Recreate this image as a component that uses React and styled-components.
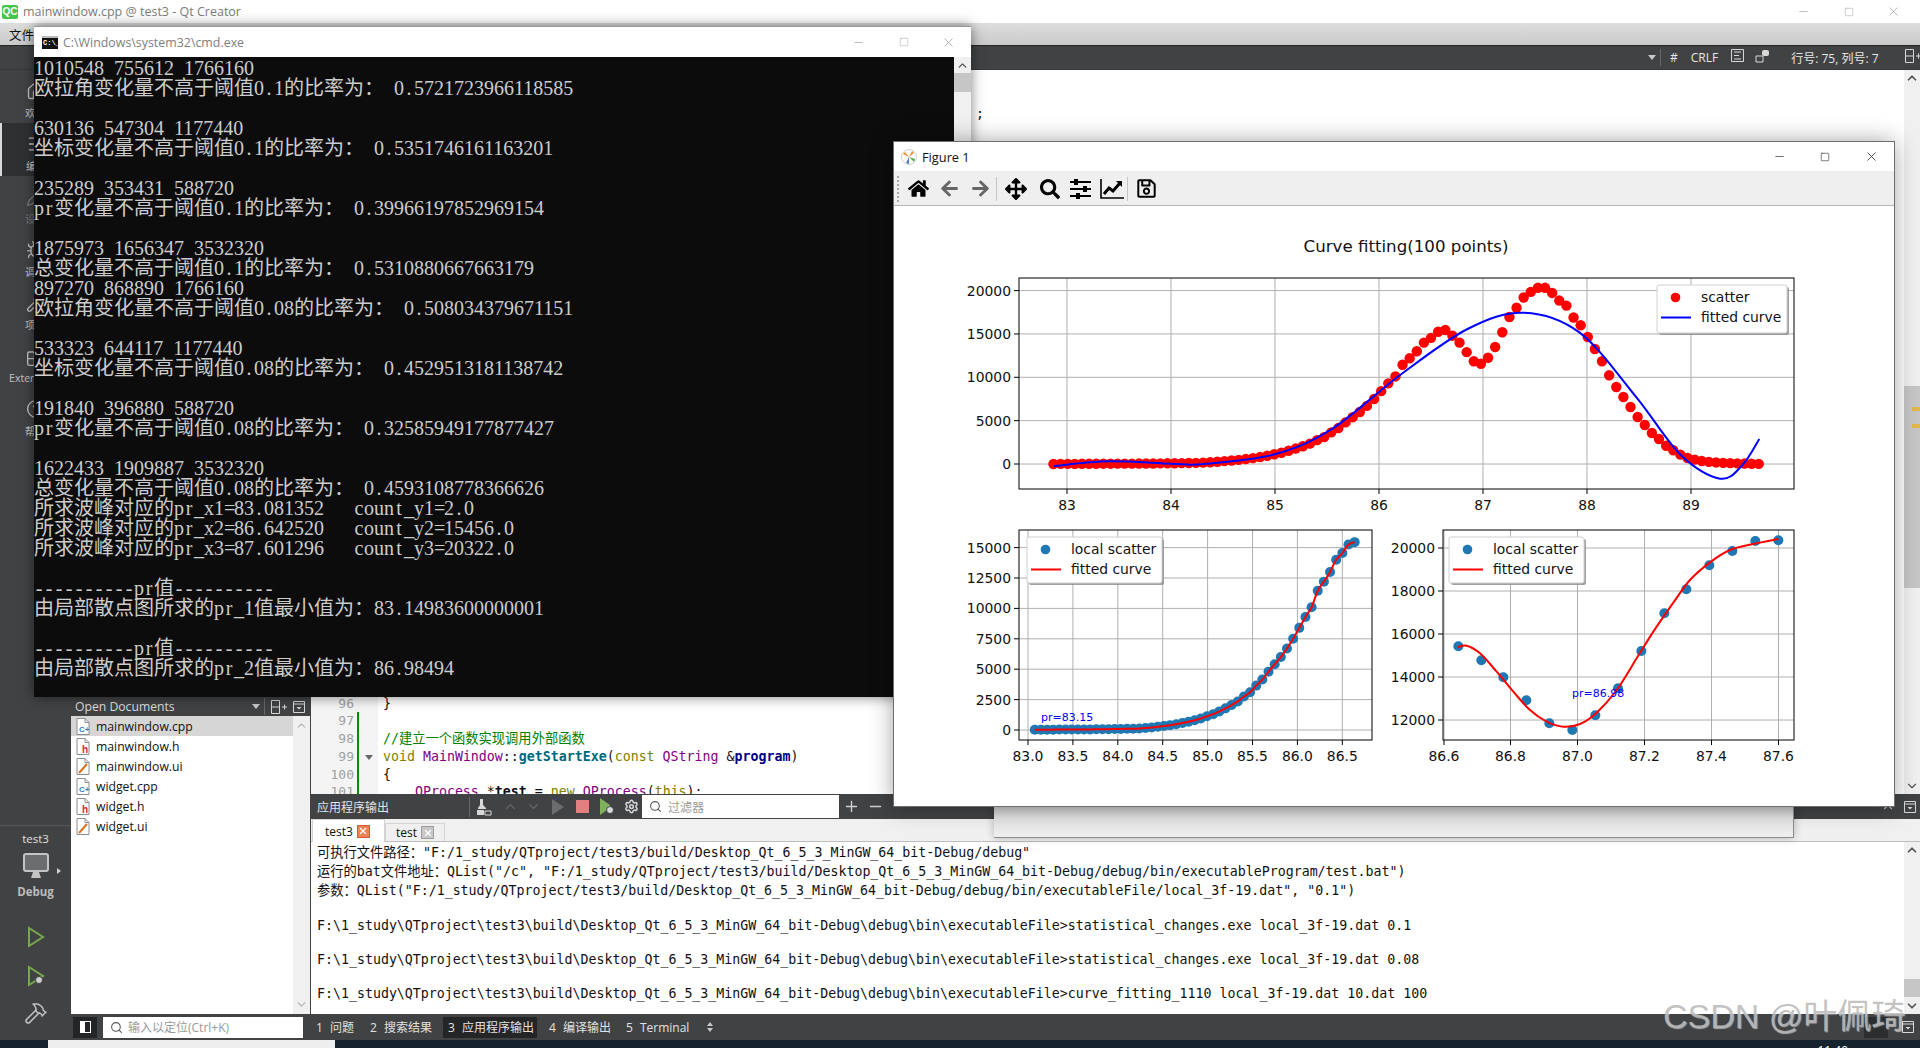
import React from 'react'
import styled, { createGlobalStyle } from 'styled-components'
import {
  FaHome, FaArrowLeft, FaArrowRight, FaArrowsAlt, FaSearch, FaRegSave,
} from 'react-icons/fa'
import {
  Home, AlignJustify, PenLine, Bug, Wrench, Blocks, HelpCircle, Hammer,
  ChevronUp, ChevronDown, Settings, Search, Plus, Minus, Square, X,
} from 'lucide-react'

const GlobalStyle = createGlobalStyle`
  html, body { margin: 0; padding: 0; background: #14232e; overflow: hidden; }
  * { box-sizing: border-box; }
`

const UI_FONT = `"Open Sans", "Noto Sans CJK SC", sans-serif`
const MONO_FONT = `"DejaVu Sans Mono", "Noto Sans CJK SC", monospace`

const Desktop = styled.div`
  position: relative;
  width: 1920px;
  height: 1048px;
  overflow: hidden;
  display: flex;
  flex-direction: column;
  background: #14232e;
  font-family: ${UI_FONT};
`
const QtWindow = styled.div`
  height: 1040px;
  display: flex;
  flex-direction: column;
`
const TitleBar = styled.div`
  height: 23px;
  flex: none;
  background: #fff;
  display: flex;
  align-items: center;
  padding: 0 4px 0 2px;
  font-size: 12.5px;
  color: #7c7c7c;
`
const QtLogo = styled.span`
  width: 16px;
  height: 14px;
  margin-right: 5px;
  border-radius: 2px;
  background: #45c64a;
  color: #fff;
  font: bold 10px "Liberation Sans", sans-serif;
  display: flex;
  align-items: center;
  justify-content: center;
`
const WinControls = styled.div`
  margin-left: auto;
  display: flex;
  align-items: center;
  color: ${p => p.$color || '#8a8a8a'};
`
const WinSlot = styled.span`
  width: ${p => p.$w || 45}px;
  display: flex;
  justify-content: center;
  align-items: center;
`
const MenuBar = styled.div`
  height: 22px;
  flex: none;
  background: linear-gradient(#dedede, #c9c9c9);
  display: flex;
  align-items: center;
  padding-left: 9px;
  font-size: 12.5px;
  color: #111;
`
const DarkToolbar = styled.div`
  height: 25px;
  flex: none;
  background: #404244;
  border-top: 1px solid #242526;
  border-bottom: 1px solid #37383a;
  display: flex;
  align-items: center;
  color: #e6e6e6;
  font-size: 12px;
`
const Caret = styled.span`
  width: 0;
  height: 0;
  border-left: 4px solid transparent;
  border-right: 4px solid transparent;
  border-top: 5px solid #c8c8c8;
`
const VSep = styled.span`
  width: 1px;
  height: ${p => p.$h || 17}px;
  background: #66686a;
  flex: none;
  margin: ${p => p.$m || '0'};
`
const BarText = styled.span`
  margin-left: ${p => p.$ml || 0}px;
  white-space: pre;
`
const Workspace = styled.div`
  flex: 1;
  min-height: 0;
  display: flex;
`
const Sidebar = styled.nav`
  width: 71px;
  flex: none;
  background: #404244;
  display: flex;
  flex-direction: column;
  color: #bdbdbd;
`
const Mode = styled.div`
  height: 53px;
  position: relative;
  padding-top: 8px;
  display: flex;
  flex-direction: column;
  align-items: center;
  justify-content: center;
  gap: 4px;
  font-size: 10.5px;
  white-space: nowrap;
  color: ${p => (p.$dim ? '#77797b' : '#c4c4c4')};
  background: ${p => (p.$active ? '#2f3031' : 'transparent')};
  border-left: ${p => (p.$active ? '2px solid #d9d9d9' : 'none')};
`
const KitGroup = styled.div`
  margin-top: auto;
  height: 215px;
  border-top: 1px solid #58595b;
  display: flex;
  flex-direction: column;
  align-items: center;
  padding-top: 5px;
`
const KitName = styled.div`
  font-size: 11.5px;
  line-height: 16px;
  color: #e0e0e0;
`
const KitDevice = styled.div`
  position: relative;
  margin-top: 6px;
  height: 26px;
`
const KitArrow = styled.span`
  position: absolute;
  left: 34px;
  top: 15px;
  width: 0;
  height: 0;
  border-top: 3px solid transparent;
  border-bottom: 3px solid transparent;
  border-left: 4px solid #cfcfcf;
`
const KitLabel = styled.div`
  margin-top: 5px;
  font-size: 11.5px;
  font-weight: 700;
  color: #bcbcbc;
`
const KitAction = styled.div`
  margin-top: ${p => p.$mt}px;
  height: 22px;
  display: flex;
  align-items: center;
`
const Center = styled.div`
  flex: 1;
  min-width: 0;
  display: flex;
  flex-direction: column;
`
const CenterTop = styled.div`
  flex: 1;
  min-height: 0;
  display: flex;
`
const DocsColumn = styled.aside`
  width: 240px;
  flex: none;
  display: flex;
  flex-direction: column;
  background: #fff;
`
const DocsSpacer = styled.div`
  height: 627px;
  flex: none;
`
const DocsHeader = styled.div`
  height: 19px;
  flex: none;
  background: #404244;
  color: #dedede;
  font-size: 12.2px;
  display: flex;
  align-items: center;
  padding-left: 4px;
`
const DocsBody = styled.div`
  flex: 1;
  display: flex;
  border-right: 1px solid #404244;
`
const DocsList = styled.div`
  flex: 1;
`
const DocRow = styled.div`
  height: 20px;
  display: flex;
  align-items: center;
  padding-left: 5px;
  gap: 6px;
  font-size: 12.2px;
  color: #111;
  background: ${p => (p.$active ? '#d6d6d6' : 'transparent')};
`
const MiniScroll = styled.div`
  width: 17px;
  flex: none;
  background: #f0f0f0;
  display: flex;
  flex-direction: column;
  align-items: center;
  justify-content: space-between;
  padding: 3px 0;
  color: #b0b0b0;
`
const RightColumn = styled.div`
  flex: 1;
  min-width: 0;
  display: flex;
  flex-direction: column;
`
const EditorPane = styled.section`
  height: 724px;
  flex: none;
  display: flex;
  background: #fff;
`
const CodeArea = styled.div`
  flex: 1;
  min-width: 0;
  overflow: hidden;
  font-family: ${MONO_FONT};
  font-size: 13.28px;
  color: #111;
`
const StrayLine = styled.div`
  margin: 35px 0 573px 665px;
  height: 17px;
  line-height: 17px;
`
const CodeRow = styled.div`
  display: flex;
  height: ${p => p.$h || 17}px;
  line-height: ${p => p.$h || 17}px;
`
const CodeText = styled.span`
  white-space: pre;
`
const LineNo = styled.span`
  width: 46px;
  flex: none;
  background: #f4f4f4;
  padding-right: 3px;
  text-align: right;
  color: #a0a0a0;
  font-size: 13px;
`
const ChangeBar = styled.span`
  width: 2px;
  flex: none;
  background: ${p => (p.$on ? '#0a8a0a' : '#f4f4f4')};
`
const FoldCol = styled.span`
  width: 19px;
  flex: none;
  margin-right: 5px;
  background: #f4f4f4;
  display: flex;
  align-items: center;
  justify-content: center;
`
const FoldMark = styled.span`
  width: 0;
  height: 0;
  border-left: 4px solid transparent;
  border-right: 4px solid transparent;
  border-top: 5px solid #666;
`
const Tok = styled.span`
  color: ${p => p.$c || '#111'};
  font-weight: ${p => (p.$b ? 700 : 400)};
`
const ScrollTrack = styled.div`
  position: relative;
  width: 16px;
  flex: none;
  background: #f0f0f0;
  display: flex;
  flex-direction: column;
  align-items: center;
  justify-content: space-between;
  color: #555;
  padding: 1px 0;
`
const ScrollThumb = styled.div`
  position: absolute;
  left: 0;
  right: 0;
  top: ${p => p.$top}px;
  height: ${p => p.$h}px;
  background: #c6c6c6;
`
const ScrollMark = styled.div`
  position: absolute;
  left: 8px;
  right: 0;
  top: ${p => p.$top}px;
  height: 4px;
  background: #e2b84c;
`
const OutputPane = styled.section`
  flex: 1;
  min-height: 0;
  display: flex;
  flex-direction: column;
`
const OutputHeader = styled.div`
  height: 25px;
  flex: none;
  background: #404244;
  display: flex;
  align-items: center;
  color: #e4e4e4;
  font-size: 12px;
  padding-left: 6px;
`
const Slot = styled.span`
  width: ${p => p.$w}px;
  flex: none;
  display: flex;
  justify-content: center;
  align-items: center;
  color: ${p => p.$c || '#d8d8d8'};
`
const HeaderTitle = styled.span`
  width: 152px;
  flex: none;
`
const FilterBox = styled.div`
  width: 197px;
  height: 23px;
  flex: none;
  background: #fff;
  display: flex;
  align-items: center;
  padding-left: 7px;
  gap: 6px;
  font-size: 12px;
  color: #9a9a9a;
`
const HeaderRight = styled.div`
  margin-left: auto;
  display: flex;
  align-items: center;
  gap: 9px;
  padding-right: 4px;
  color: #bdbdbd;
`
const TabBar = styled.div`
  height: 23px;
  flex: none;
  background: #f0f0f0;
  border-bottom: 1px solid #bdbdbd;
  display: flex;
  align-items: flex-end;
  padding-left: 1px;
`
const Tab = styled.div`
  height: ${p => (p.$active ? 23 : 18)}px;
  width: ${p => (p.$active ? 73 : 60)}px;
  margin-bottom: ${p => (p.$active ? -1 : 0)}px;
  padding-left: ${p => (p.$active ? 12 : 10)}px;
  background: ${p => (p.$active ? '#fff' : '#f0f0f0')};
  border: 1px solid #d4d4d4;
  border-bottom: none;
  display: flex;
  align-items: center;
  gap: 4px;
  font-size: 12px;
  color: #111;
`
const TabClose = styled.span`
  width: 13px;
  height: 13px;
  flex: none;
  display: flex;
  align-items: center;
  justify-content: center;
  color: #fff;
  background: ${p => (p.$active ? '#ee8255' : '#c8c8c8')};
  border: 1px solid ${p => (p.$active ? '#d8593a' : '#9d9d9d')};
`
const OutputBody = styled.div`
  flex: 1;
  min-height: 0;
  display: flex;
  background: #fff;
`
const OutputText = styled.div`
  flex: 1;
  min-width: 0;
  padding: 1px 0 0 6px;
  font-family: ${MONO_FONT};
  font-size: 13.28px;
  color: #111;
  white-space: pre;
  overflow: hidden;
`
const OutputLine = styled.div`
  height: ${p => p.$h || 17}px;
  line-height: ${p => p.$h || 17}px;
`
const StatusBar = styled.footer`
  height: 26px;
  flex: none;
  background: #404244;
  display: flex;
  align-items: center;
  color: #e2e2e2;
  font-size: 12px;
`
const SideToggle = styled.span`
  width: 24px;
  height: 21px;
  margin-left: 2px;
  background: #242526;
  display: flex;
  align-items: center;
  justify-content: center;
`
const ToggleGlyph = styled.span`
  width: 11px;
  height: 12px;
  border: 1px solid #fff;
  border-left-width: 5px;
`
const LocatorBox = styled.div`
  width: 200px;
  height: 21px;
  margin: 0 8px 0 6px;
  background: #fff;
  color: #9a9a9a;
  display: flex;
  align-items: center;
  padding-left: 7px;
  gap: 5px;
  font-size: 12px;
`
const PaneItem = styled.div`
  width: ${p => p.$w}px;
  height: 21px;
  margin-right: ${p => p.$mr || 0}px;
  flex: none;
  padding-left: 5px;
  display: flex;
  align-items: center;
  gap: 7px;
  white-space: nowrap;
  background: ${p => (p.$active ? '#242526' : 'transparent')};
`
const UpDown = styled.span`
  display: flex;
  flex-direction: column;
  gap: 2px;
  margin-left: 4px;
`
const UpArrow = styled.span`
  width: 0;
  height: 0;
  border-left: 3px solid transparent;
  border-right: 3px solid transparent;
  border-bottom: 4px solid #c8c8c8;
`
const DownArrow = styled(UpArrow)`
  border-bottom: none;
  border-top: 4px solid #c8c8c8;
`
const StatusRight = styled.div`
  margin-left: auto;
  display: flex;
  align-items: center;
  gap: 14px;
  padding-right: 6px;
`
const DarkButton = styled.span`
  width: 24px;
  height: 21px;
  background: #2c2d2e;
`
const Taskbar = styled.div`
  flex: 1;
  display: flex;
  overflow: hidden;
  background: #14232e;
`
const TaskThumb = styled.div`
  width: 287px;
  margin-left: 48px;
  background: #eeeeee;
`
const Clock = styled.div`
  margin-left: auto;
  margin-right: 72px;
  padding-top: 4px;
  font-size: 12px;
  line-height: 14px;
  color: #fff;
`
// windows floating over the IDE
const CmdWindow = styled.div`
  position: absolute;
  left: 34px;
  top: 26px;
  width: 937px;
  height: 671px;
  display: flex;
  flex-direction: column;
  box-shadow: 0 0 12px rgba(0, 0, 0, 0.5);
  border-top: 1px solid #999;
`
const CmdTitle = styled.div`
  height: 30px;
  flex: none;
  background: #fff;
  display: flex;
  align-items: center;
  padding-left: 8px;
  gap: 5px;
  font-size: 12.4px;
  color: #7e7e7e;
`
const CmdIcon = styled.span`
  width: 16px;
  height: 13px;
  background: #111;
  border-top: 2px solid #bbb;
  color: #fff;
  font: bold 7px "Liberation Mono", monospace;
  line-height: 10px;
  padding-left: 1px;
  overflow: hidden;
`
const CmdBody = styled.div`
  flex: 1;
  min-height: 0;
  display: flex;
  background: #0c0c0c;
`
const Console = styled.div`
  flex: 1;
  min-width: 0;
  padding-top: 1px;
  overflow: hidden;
  color: #cccccc;
  font-family: "Liberation Serif", "Noto Sans CJK SC", serif;
  font-size: 20px;
`
const ConsoleLine = styled.div`
  height: 20px;
  line-height: 20px;
  white-space: pre;
`
const Cell = styled.span`
  display: inline-block;
  width: 10px;
  text-align: center;
  white-space: pre;
`
const CmdScroll = styled.div`
  position: relative;
  width: 17px;
  flex: none;
  background: #f0f0f0;
  display: flex;
  justify-content: center;
  color: #555;
  padding-top: 2px;
`
const BackDialog = styled.div`
  position: absolute;
  left: 994px;
  top: 780px;
  width: 800px;
  height: 58px;
  background: linear-gradient(#c4c4c4 26px, #e2e2e2 38px, #efefef);
  border-right: 1px solid #8c8c8c;
  border-bottom: 1px solid #8c8c8c;
  box-shadow: 0 0 8px rgba(0, 0, 0, 0.25);
`
const FigureWindow = styled.div`
  position: absolute;
  left: 894px;
  top: 142px;
  width: 1000px;
  height: 664px;
  display: flex;
  flex-direction: column;
  background: #fff;
  box-shadow: 0 0 22px rgba(0, 0, 0, 0.38);
  outline: 1px solid #6e6e6e;
`
const FigureTitle = styled.div`
  height: 29px;
  flex: none;
  display: flex;
  align-items: center;
  padding-left: 7px;
  gap: 5px;
  font-size: 12.8px;
  color: #111;
`
const FigureToolbar = styled.div`
  height: 35px;
  flex: none;
  background: #efefef;
  border-bottom: 1px solid #b5b5b5;
  display: flex;
  align-items: center;
  padding: 1px 0 0 11px;
  color: #000;
`
const Grip = styled.span`
  width: 2px;
  height: 26px;
  margin-left: -8px;
  margin-right: 4px;
  border-left: 2px dotted #a8a8a8;
`
const ToolSlot = styled.span`
  width: ${p => p.$w || 31}px;
  flex: none;
  display: flex;
  justify-content: center;
  color: ${p => p.$c || '#000'};
`
const ToolSep = styled.span`
  width: 1px;
  height: 24px;
  flex: none;
  background: #c4c4c4;
`
const PlotSvg = styled.svg`
  display: block;
  font-family: "DejaVu Sans", sans-serif;
  font-size: 13.9px;
  fill: #111;
`
const Watermark = styled.div`
  position: absolute;
  left: 1663px;
  top: 994px;
  white-space: nowrap;
  font-family: "Liberation Sans", "Noto Sans CJK SC", sans-serif;
  font-size: 34px;
  line-height: 44px;
  color: rgba(185, 185, 185, 0.85);
  text-shadow: 1px 1px 1px rgba(255, 255, 255, 0.55);
`

const CONSOLE_LINES = [
  '1010548 755612 1766160',
  '欧拉角变化量不高于阈值0.1的比率为： 0.5721723966118585',
  '',
  '630136 547304 1177440',
  '坐标变化量不高于阈值0.1的比率为： 0.5351746161163201',
  '',
  '235289 353431 588720',
  'pr变化量不高于阈值0.1的比率为： 0.39966197852969154',
  '',
  '1875973 1656347 3532320',
  '总变化量不高于阈值0.1的比率为： 0.5310880667663179',
  '897270 868890 1766160',
  '欧拉角变化量不高于阈值0.08的比率为： 0.508034379671151',
  '',
  '533323 644117 1177440',
  '坐标变化量不高于阈值0.08的比率为： 0.4529513181138742',
  '',
  '191840 396880 588720',
  'pr变化量不高于阈值0.08的比率为： 0.32585949177877427',
  '',
  '1622433 1909887 3532320',
  '总变化量不高于阈值0.08的比率为： 0.4593108778366626',
  '所求波峰对应的pr_x1=83.081352   count_y1=2.0',
  '所求波峰对应的pr_x2=86.642520   count_y2=15456.0',
  '所求波峰对应的pr_x3=87.601296   count_y3=20322.0',
  '',
  '----------pr值----------',
  '由局部散点图所求的pr_1值最小值为：83.14983600000001',
  '',
  '----------pr值----------',
  '由局部散点图所求的pr_2值最小值为：86.98494',
]

const BUILD = 'F:/1_study/QTproject/test3/build/Desktop_Qt_6_5_3_MinGW_64_bit-Debug'
const WIN_BIN = 'F:\\1_study\\QTproject\\test3\\build\\Desktop_Qt_6_5_3_MinGW_64_bit-Debug\\debug\\bin\\executableFile>'
const OUTPUT_LINES = [
  { h: 19, t: `可执行文件路径："${BUILD}/debug"` },
  { h: 19, t: `运行的bat文件地址：QList("/c", "${BUILD}/debug/bin/executableProgram/test.bat")` },
  { h: 19, t: `参数：QList("${BUILD}/debug/bin/executableFile/local_3f-19.dat", "0.1")` },
  { t: '' },
  { t: `${WIN_BIN}statistical_changes.exe local_3f-19.dat 0.1` },
  { t: '' },
  { t: `${WIN_BIN}statistical_changes.exe local_3f-19.dat 0.08` },
  { t: '' },
  { t: `${WIN_BIN}curve_fitting_1110 local_3f-19.dat 10.dat 100` },
]

// digits and CJK already have the console's cell widths, the rest gets a cell
function ConsoleText({ text }) {
  const runs = text.match(/\d+|[\u4e00-\u9fff\uff1a]+|./g) || []
  return (
    <ConsoleLine>
      {runs.map((r, i) => (r.length === 1 && !/[\d\u4e00-\u9fff\uff1a]/.test(r)
        ? <Cell key={i}>{r}</Cell>
        : <React.Fragment key={i}>{r}</React.Fragment>))}
    </ConsoleLine>
  )
}

// scatter values of the 100 points, x = 82.87 + 0.0685 * i
const Y_VALUES = [
  2, 10, 15, 20, 25, 30, 30, 35, 35, 40, 40, 45, 50, 55, 60, 70, 80, 90, 100, 110,
  130, 160, 200, 260, 330, 400, 480, 570, 680, 800, 950, 1130, 1300, 1530, 1780, 2050, 2350, 2750, 3100, 3650,
  4150, 4800, 5400, 6000, 6700, 7500, 8400, 9300, 10100, 11450, 12200, 13000, 14000, 14550, 15250, 15450, 14800, 14000, 12900, 11850,
  11560, 12250, 13500, 15200, 16950, 18020, 19200, 19850, 20322, 20322, 19730, 18850, 18270, 16900, 16000, 14650, 13270, 11850, 10230, 8880,
  7730, 6580, 5420, 4500, 3580, 2880, 2100, 1580, 1080, 690, 500, 350, 250, 180, 130, 100, 70, 50, 30, 10,
]
const POINTS = Y_VALUES.map((y, i) => [82.87 + 0.0685 * i, y])

const smooth = pts => {
  let d = `M${pts[0][0]} ${pts[0][1]}`
  for (let i = 0; i < pts.length - 1; i++) {
    const p0 = pts[i - 1] || pts[i]
    const p1 = pts[i]
    const p2 = pts[i + 1]
    const p3 = pts[i + 2] || p2
    d += `C${p1[0] + (p2[0] - p0[0]) / 6} ${p1[1] + (p2[1] - p0[1]) / 6} ${p2[0] - (p3[0] - p1[0]) / 6} ${p2[1] - (p3[1] - p1[1]) / 6} ${p2[0]} ${p2[1]}`
  }
  return d
}

const MAIN_CURVE = [
  [203, 618], [300, 604], [412, 611], [470, 612], [598, 582], [700, 505], [820, 345], [940, 207], [1040, 158],
  [1140, 218], [1240, 410], [1320, 585], [1390, 656], [1430, 615], [1460, 537],
].map(([x, y]) => [940 + x / 1.782, 260 + y / 3])

const RIGHT_POINTS = [
  [115, 379], [184, 421], [250, 472], [319, 541], [388, 610], [457, 630], [526, 586], [594, 505],
  [664, 393], [733, 280], [799, 208], [868, 136], [937, 93], [1006, 63], [1075, 61],
].map(([x, y]) => [1420 + x / 3, 520 + y / 3])

const RIGHT_CURVE = [
  [113, 382], [140, 377], [180, 400], [230, 455], [280, 515], [330, 570], [380, 605], [430, 620], [480, 612], [530, 578],
  [590, 510], [650, 415], [700, 335], [760, 248], [810, 180], [870, 127], [930, 90], [1000, 72], [1075, 57],
].map(([x, y]) => [1420 + x / 3, 520 + y / 3])

const LEFT_FIT = POINTS.slice(3, 56).map(([x, y]) => [1028 + (x - 83) * 89.8, 730 - y * 0.01216])

function Axes({ box, xTicks, yTicks, children }) {
  const { l, t, r, b } = box
  return (
    <g>
      {xTicks.map(([, x]) => <line key={x} x1={x} x2={x} y1={t} y2={b} stroke="#b0b0b0" />)}
      {yTicks.map(([, y]) => <line key={y} x1={l} x2={r} y1={y} y2={y} stroke="#b0b0b0" />)}
      {children}
      <rect x={l} y={t} width={r - l} height={b - t} fill="none" stroke="#000" />
      {xTicks.map(([label, x]) => (
        <g key={label}>
          <line x1={x} x2={x} y1={b} y2={b + 5} stroke="#000" />
          <text x={x} y={b + 21} textAnchor="middle">{label}</text>
        </g>
      ))}
      {yTicks.map(([label, y]) => (
        <g key={label}>
          <line x1={l - 5} x2={l} y1={y} y2={y} stroke="#000" />
          <text x={l - 8} y={y + 5} textAnchor="end">{label}</text>
        </g>
      ))}
    </g>
  )
}

function Legend({ x, y, w, h, dotColor, lineColor, first, second }) {
  return (
    <g>
      <rect x={x + 2} y={y + 2} width={w} height={h} rx="2" fill="#8a8a8a" opacity="0.8" />
      <rect x={x} y={y} width={w} height={h} rx="2" fill="#fff" stroke="#d0d0d0" />
      <circle cx={x + 18.5} cy={y + 12.5} r="4.8" fill={dotColor} />
      <text x={x + 44} y={y + 17}>{first}</text>
      <line x1={x + 4} x2={x + 34} y1={y + 32.5} y2={y + 32.5} stroke={lineColor} strokeWidth="2" />
      <text x={x + 44} y={y + 37}>{second}</text>
    </g>
  )
}

function FigurePlots() {
  const mainX = p => 1067 + (p - 83) * 104
  const mainY = v => 464 - v * 0.00867
  const leftX = p => 1028 + (p - 83) * 89.8
  const leftY = v => 730 - v * 0.01216
  return (
    <PlotSvg width="1000" height="600" viewBox="894 206 1000 600">
      <text x="1406" y="252" textAnchor="middle" fontSize="16.67">Curve fitting(100 points)</text>

      <Axes
        box={{ l: 1019, t: 278, r: 1794, b: 489 }}
        xTicks={[83, 84, 85, 86, 87, 88, 89].map(v => [String(v), mainX(v)])}
        yTicks={[20000, 15000, 10000, 5000, 0].map(v => [String(v), mainY(v)])}
      >
        {POINTS.map(([x, y], i) => <circle key={i} cx={mainX(x)} cy={mainY(y)} r="5.2" fill="#ff0000" />)}
        <path d={smooth(MAIN_CURVE)} fill="none" stroke="#0000ff" strokeWidth="2" />
        <Legend x={1657} y={285} w={130} h={48} dotColor="#ff0000" lineColor="#0000ff" first="scatter" second="fitted curve" />
      </Axes>

      <Axes
        box={{ l: 1019, t: 530, r: 1372, b: 740 }}
        xTicks={['83.0', '83.5', '84.0', '84.5', '85.0', '85.5', '86.0', '86.5'].map(v => [v, leftX(Number(v))])}
        yTicks={[15000, 12500, 10000, 7500, 5000, 2500, 0].map(v => [String(v), leftY(v)])}
      >
        {POINTS.slice(3, 56).map(([x, y], i) => <circle key={i} cx={leftX(x)} cy={leftY(y)} r="5" fill="#1f77b4" />)}
        <path d={smooth(LEFT_FIT)} fill="none" stroke="#ff0000" strokeWidth="2" />
        <text x="1041" y="721" fontSize="11" fill="#0000ff">pr=83.15</text>
        <Legend x={1027} y={537} w={135} h={46} dotColor="#1f77b4" lineColor="#ff0000" first="local scatter" second="fitted curve" />
      </Axes>

      <Axes
        box={{ l: 1443, t: 530, r: 1794, b: 740 }}
        xTicks={[['86.6', 1444], ['86.8', 1510.5], ['87.0', 1577.5], ['87.2', 1644.5], ['87.4', 1711.5], ['87.6', 1778.5]]}
        yTicks={[['20000', 548], ['18000', 591], ['16000', 634], ['14000', 677], ['12000', 720]]}
      >
        {RIGHT_POINTS.map(([x, y], i) => <circle key={i} cx={x} cy={y} r="5" fill="#1f77b4" />)}
        <path d={smooth(RIGHT_CURVE)} fill="none" stroke="#ff0000" strokeWidth="2" />
        <text x="1572" y="697" fontSize="11" fill="#0000ff">pr=86.98</text>
        <Legend x={1449} y={537} w={135} h={46} dotColor="#1f77b4" lineColor="#ff0000" first="local scatter" second="fitted curve" />
      </Axes>
    </PlotSvg>
  )
}

const DocIcon = ({ kind }) => (
  <svg width="14" height="17" viewBox="0 0 14 17" style={{ flex: 'none' }}>
    <path d="M1 .5h8l4 4v12H1z" fill="#fff" stroke="#8c8c8c" />
    <path d="M9 .5v4h4" fill="none" stroke="#8c8c8c" />
    {kind === 'cpp' && <text x="3" y="14" fontSize="8" fontWeight="700" fill="#2f7fc1" fontFamily="Liberation Sans">C+</text>}
    {kind === 'h' && <text x="6" y="15" fontSize="10" fontWeight="700" fill="#d62b2b" fontFamily="Liberation Sans">h</text>}
    {kind === 'ui' && <path d="M3 15L11 6" stroke="#d9721c" strokeWidth="2" />}
  </svg>
)

const MonitorIcon = () => (
  <svg width="26" height="26" viewBox="0 0 26 26">
    <rect x="1" y="1" width="24" height="17" rx="2" fill="#6b6d6f" stroke="#c4c4c4" strokeWidth="2" />
    <path d="M10 19h6l2 6H8z" fill="#c4c4c4" />
  </svg>
)

const RunIcon = ({ debug }) => (
  <svg width="18" height="22" viewBox="0 0 18 22">
    <path d="M2 2l14 9-14 9z" fill="none" stroke="#78a84e" strokeWidth="2" />
    {debug && <circle cx="12" cy="15" r="3.5" fill="#cfcfcf" stroke="#404244" />}
  </svg>
)

const SlidersIcon = () => (
  <svg width="21" height="20" viewBox="0 0 21 20">
    <path d="M0 3h21M0 10h21M0 17h21" stroke="#000" strokeWidth="2" />
    <rect x="4" y="0" width="4" height="6" /><rect x="13" y="7" width="4" height="6" /><rect x="6" y="14" width="4" height="6" />
  </svg>
)

const ChartIcon = () => (
  <svg width="24" height="22" viewBox="0 0 24 22">
    <path d="M1 1v19h23" fill="none" stroke="#000" strokeWidth="1.6" />
    <path d="M4 16l5-6 4 3 7-8" fill="none" stroke="#000" strokeWidth="3" />
    <path d="M16 3h6v6z" />
  </svg>
)

const BrushIcon = () => (
  <svg width="16" height="18" viewBox="0 0 16 18">
    <path d="M4 1h3v6l3 3v1H2v-1l2-3z" fill="#d8d8d8" />
    <path d="M9 13h6v4H9z" fill="none" stroke="#d8d8d8" />
    <path d="M1 12h7v5H1z" fill="#d8d8d8" />
  </svg>
)

const SplitIcon = () => (
  <svg width="16" height="14" viewBox="0 0 16 14">
    <path d="M.5.5h8v13h-8zM.5 7h8M11 7h5M13.5 4.5v5" fill="none" stroke="#d8d8d8" />
  </svg>
)

const CloseDocIcon = () => (
  <svg width="12" height="12" viewBox="0 0 12 12">
    <path d="M.5.5h11v11H.5z" fill="none" stroke="#d8d8d8" />
    <path d="M.5 3h11" stroke="#d8d8d8" />
    <path d="M3.5 6h5L6 8.5z" fill="#d8d8d8" />
  </svg>
)

const DOCS = [
  { name: 'mainwindow.cpp', kind: 'cpp', active: true },
  { name: 'mainwindow.h', kind: 'h' },
  { name: 'mainwindow.ui', kind: 'ui' },
  { name: 'widget.cpp', kind: 'cpp' },
  { name: 'widget.h', kind: 'h' },
  { name: 'widget.ui', kind: 'ui' },
]

const MODES = [
  { label: '欢迎', Icon: Home },
  { label: '编辑', Icon: AlignJustify, active: true },
  { label: '设计', Icon: PenLine, dim: true },
  { label: '调试', Icon: Bug },
  { label: '项目', Icon: Wrench },
  { label: 'Extensions', Icon: Blocks },
  { label: '帮助', Icon: HelpCircle },
]

export default function App() {
  return (
    <Desktop>
      <GlobalStyle />
      <QtWindow>
        <TitleBar>
          <QtLogo>QC</QtLogo>
          mainwindow.cpp @ test3 - Qt Creator
          <WinControls>
            <WinSlot><Minus size={13} strokeWidth={1} /></WinSlot>
            <WinSlot><Square size={10} strokeWidth={1} /></WinSlot>
            <WinSlot><X size={15} strokeWidth={1} /></WinSlot>
          </WinControls>
        </TitleBar>
        <MenuBar>文件</MenuBar>
        <DarkToolbar>
          <BarText $ml={1648} />
          <Caret />
          <VSep $m="0 8px 0 4px" />
          <BarText $ml={1}>#</BarText>
          <BarText $ml={13}>CRLF</BarText>
          <BarText $ml={13}>
            <svg width="13" height="13" viewBox="0 0 13 13"><path d="M.5.5h12v12H.5zM3 3h7M3 6.500h5M3 10h7" fill="none" stroke="#d8d8d8" /></svg>
          </BarText>
          <BarText $ml={11}>
            <svg width="15" height="14" viewBox="0 0 15 14"><path d="M1 7h7v6H1z" fill="none" stroke="#d8d8d8" /><rect x="7" y="1" width="7" height="6" rx="2" fill="#d8d8d8" /></svg>
          </BarText>
          <BarText $ml={21}>行号: 75, 列号: 7</BarText>
          <BarText $ml={26}><SplitIcon /></BarText>
        </DarkToolbar>
        <Workspace>
          <Sidebar>
            {MODES.map(({ label, Icon, active, dim }) => (
              <Mode key={label} $active={active} $dim={dim}>
                <Icon size={20} strokeWidth={1.6} />
                {label}
              </Mode>
            ))}
            <KitGroup>
              <KitName>test3</KitName>
              <KitDevice><MonitorIcon /><KitArrow /></KitDevice>
              <KitLabel>Debug</KitLabel>
              <KitAction $mt={27}><RunIcon /></KitAction>
              <KitAction $mt={17}><RunIcon debug /></KitAction>
              <KitAction $mt={15}><Hammer size={24} strokeWidth={1.5} color="#c0c0c0" /></KitAction>
            </KitGroup>
          </Sidebar>
          <Center>
            <CenterTop>
              <DocsColumn>
                <DocsSpacer />
                <DocsHeader>
                  Open Documents
                  <WinControls $color="#d8d8d8">
                    <Caret />
                    <VSep $m="0 6px 0 4px" />
                    <SplitIcon />
                    <WinSlot $w={24}><CloseDocIcon /></WinSlot>
                  </WinControls>
                </DocsHeader>
                <DocsBody>
                  <DocsList>
                    {DOCS.map(d => (
                      <DocRow key={d.name} $active={d.active}>
                        <DocIcon kind={d.kind} />
                        {d.name}
                      </DocRow>
                    ))}
                  </DocsList>
                  <MiniScroll>
                    <ChevronUp size={13} />
                    <ChevronDown size={13} />
                  </MiniScroll>
                </DocsBody>
              </DocsColumn>
              <RightColumn>
                <EditorPane>
                  <CodeArea>
                    <StrayLine>;</StrayLine>
                    <CodeRow><LineNo>96</LineNo><ChangeBar /><FoldCol /><CodeText>{'}'}</CodeText></CodeRow>
                    <CodeRow><LineNo>97</LineNo><ChangeBar $on /><FoldCol /></CodeRow>
                    <CodeRow $h={19}><LineNo>98</LineNo><ChangeBar $on /><FoldCol /><Tok $c="#008000">//建立一个函数实现调用外部函数</Tok></CodeRow>
                    <CodeRow $h={18}>
                      <LineNo>99</LineNo><ChangeBar $on /><FoldCol><FoldMark /></FoldCol>
                      <CodeText>
                        <Tok $c="#808000">void</Tok>{' '}<Tok $c="#800080">MainWindow</Tok>::<Tok $c="#00677c" $b>getStartExe</Tok>(<Tok $c="#808000">const</Tok>{' '}<Tok $c="#800080">QString</Tok>{' '}&amp;<Tok $c="#000080" $b>program</Tok>)
                      </CodeText>
                    </CodeRow>
                    <CodeRow><LineNo>100</LineNo><ChangeBar $on /><FoldCol /><CodeText>{'{'}</CodeText></CodeRow>
                    <CodeRow>
                      <LineNo>101</LineNo><ChangeBar $on /><FoldCol />
                      <CodeText>
                        {'    '}<Tok $c="#800080">QProcess</Tok>{' '}*<Tok $b>test</Tok> = <Tok $c="#808000">new</Tok>{' '}<Tok $c="#800080">QProcess</Tok>(<Tok $c="#808000">this</Tok>);
                      </CodeText>
                    </CodeRow>
                  </CodeArea>
                  <ScrollTrack>
                    <ChevronUp size={14} strokeWidth={3} />
                    <ScrollThumb $top={316} $h={202} />
                    <ScrollMark $top={337} />
                    <ScrollMark $top={354} />
                    <ChevronDown size={14} strokeWidth={2} />
                  </ScrollTrack>
                </EditorPane>
                <OutputPane>
                  <OutputHeader>
                    <HeaderTitle>应用程序输出</HeaderTitle>
                    <VSep $h={20} />
                    <Slot $w={28}><BrushIcon /></Slot>
                    <Slot $w={24} $c="#66686a"><ChevronUp size={15} /></Slot>
                    <Slot $w={23} $c="#66686a"><ChevronDown size={15} /></Slot>
                    <Slot $w={25}>
                      <svg width="12" height="16" viewBox="0 0 12 16"><path d="M0 0l12 8-12 8z" fill="#6a6c6e" /></svg>
                    </Slot>
                    <Slot $w={24}>
                      <svg width="13" height="13" viewBox="0 0 13 13"><rect width="13" height="13" fill="#e08080" /></svg>
                    </Slot>
                    <Slot $w={26}>
                      <svg width="14" height="17" viewBox="0 0 14 17"><path d="M0 0l10 7v3L0 17z" fill="#7fb05a" /><circle cx="10" cy="12" r="3.500" fill="#d8d8d8" stroke="#404244" /></svg>
                    </Slot>
                    <Slot $w={22}><Settings size={15} strokeWidth={2.4} /></Slot>
                    <FilterBox><Search size={13} color="#555" />过滤器</FilterBox>
                    <Slot $w={24} $c="#d0d0d0"><Plus size={17} strokeWidth={2} /></Slot>
                    <Slot $w={24} $c="#d0d0d0"><Minus size={17} strokeWidth={2} /></Slot>
                    <HeaderRight>
                      <ChevronUp size={14} />
                      <CloseDocIcon />
                    </HeaderRight>
                  </OutputHeader>
                  <TabBar>
                    <Tab $active>test3<TabClose $active><X size={10} strokeWidth={3} /></TabClose></Tab>
                    <Tab>test<TabClose><X size={10} strokeWidth={3} /></TabClose></Tab>
                  </TabBar>
                  <OutputBody>
                    <OutputText>
                      {OUTPUT_LINES.map((l, i) => <OutputLine key={i} $h={l.h}>{l.t}</OutputLine>)}
                    </OutputText>
                    <ScrollTrack>
                      <ChevronUp size={14} strokeWidth={3} />
                      <ScrollThumb $top={137} $h={18} />
                      <ChevronDown size={14} strokeWidth={3} />
                    </ScrollTrack>
                  </OutputBody>
                </OutputPane>
              </RightColumn>
            </CenterTop>
            <StatusBar>
              <SideToggle><ToggleGlyph /></SideToggle>
              <LocatorBox><Search size={13} color="#555" />输入以定位(Ctrl+K)</LocatorBox>
              <PaneItem $w={54}>1<span>问题</span></PaneItem>
              <PaneItem $w={78}>2<span>搜索结果</span></PaneItem>
              <PaneItem $w={94} $mr={7} $active>3<span>应用程序输出</span></PaneItem>
              <PaneItem $w={77}>4<span>编译输出</span></PaneItem>
              <PaneItem $w={82}>5<span>Terminal</span></PaneItem>
              <UpDown><UpArrow /><DownArrow /></UpDown>
              <StatusRight>
                <DarkButton />
                <CloseDocIcon />
              </StatusRight>
            </StatusBar>
          </Center>
        </Workspace>
      </QtWindow>
      <Taskbar>
        <TaskThumb />
        <Clock>11:40</Clock>
      </Taskbar>

      <CmdWindow>
        <CmdTitle>
          <CmdIcon>C:\_</CmdIcon>
          C:\Windows\system32\cmd.exe
          <WinControls>
            <WinSlot><Minus size={13} strokeWidth={1} /></WinSlot>
            <WinSlot><Square size={10} strokeWidth={1} /></WinSlot>
            <WinSlot><X size={15} strokeWidth={1} /></WinSlot>
          </WinControls>
        </CmdTitle>
        <CmdBody>
          <Console>
            {CONSOLE_LINES.map((l, i) => <ConsoleText key={i} text={l} />)}
          </Console>
          <CmdScroll>
            <ChevronUp size={13} strokeWidth={2.5} />
            <ScrollThumb $top={16} $h={19} />
          </CmdScroll>
        </CmdBody>
      </CmdWindow>

      <BackDialog />

      <FigureWindow>
        <FigureTitle>
          <svg width="16" height="16" viewBox="0 0 16 16" style={{ flex: 'none' }}>
            <circle cx="8" cy="8" r="7.500" fill="#fff" stroke="#cfcfcf" />
            <path d="M8 8L2 5 4 3zM8 8l3-6 2 2z" fill="#e8912d" />
            <path d="M8 8l6 2-1 3z" fill="#5aa84f" />
            <path d="M8 8l-3 6 3 1z" fill="#4c7fc1" />
          </svg>
          Figure 1
          <WinControls $color="#222">
            <WinSlot $w={46}><Minus size={13} strokeWidth={1.2} /></WinSlot>
            <WinSlot $w={46}><Square size={10} strokeWidth={1.4} /></WinSlot>
            <WinSlot $w={46}><X size={15} strokeWidth={1.2} /></WinSlot>
          </WinControls>
        </FigureTitle>
        <FigureToolbar>
          <Grip />
          <ToolSlot><FaHome size={21} /></ToolSlot>
          <ToolSlot $c="#666"><FaArrowLeft size={19} /></ToolSlot>
          <ToolSlot $c="#666"><FaArrowRight size={19} /></ToolSlot>
          <ToolSep />
          <ToolSlot $w={37}><FaArrowsAlt size={22} /></ToolSlot>
          <ToolSlot><FaSearch size={20} /></ToolSlot>
          <ToolSlot><SlidersIcon /></ToolSlot>
          <ToolSlot><ChartIcon /></ToolSlot>
          <ToolSep />
          <ToolSlot $w={37}><FaRegSave size={21} /></ToolSlot>
        </FigureToolbar>
        <FigurePlots />
      </FigureWindow>

      <Watermark>CSDN @叶佩琦</Watermark>
    </Desktop>
  )
}
